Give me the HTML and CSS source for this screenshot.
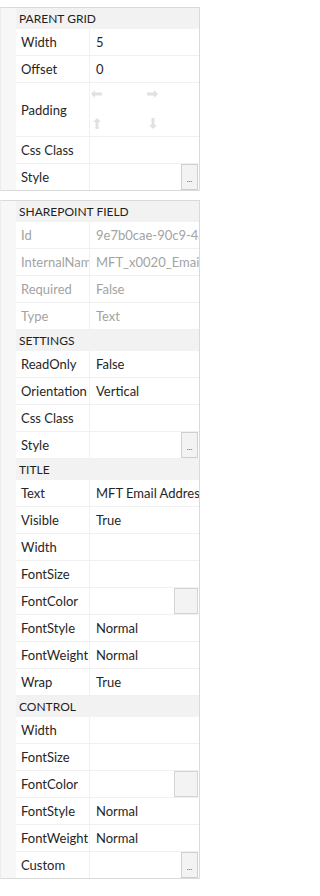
FILE: index.html
```html
<!DOCTYPE html>
<html>
<head>
<meta charset="utf-8">
<link rel="stylesheet" href="styles.css">
</head>
<body>
<div class="panel first">
  <div class="hdr">PARENT GRID</div>
  <div class="row"><div class="name">Width</div><div class="val">5</div></div>
  <div class="row"><div class="name">Offset</div><div class="val">0</div></div>
  <div class="row tall"><div class="name">Padding</div>
    <div class="val arrows">
      <svg class="arr" viewBox="0 0 11 8"><path d="M0 4 L4 0 L4 2.5 L11 2.5 L11 5.5 L4 5.5 L4 8 Z"/></svg>
      <svg class="arr" viewBox="0 0 11 8"><path d="M11 4 L7 0 L7 2.5 L0 2.5 L0 5.5 L7 5.5 L7 8 Z"/></svg>
      <svg class="arr v" viewBox="0 0 8 11"><path d="M4 0 L8 4 L5.5 4 L5.5 11 L2.5 11 L2.5 4 L0 4 Z"/></svg>
      <svg class="arr v" viewBox="0 0 8 11"><path d="M4 11 L8 7 L5.5 7 L5.5 0 L2.5 0 L2.5 7 L0 7 Z"/></svg>
    </div>
  </div>
  <div class="row"><div class="name">Css Class</div><div class="val"></div></div>
  <div class="row"><div class="name">Style</div><div class="val"><span class="btn">...</span></div></div>
</div>

<div class="panel">
  <div class="hdr">SHAREPOINT FIELD</div>
  <div class="row dim"><div class="name">Id</div><div class="val">9e7b0cae-90c9-4a1e-b2c3</div></div>
  <div class="row dim"><div class="name">InternalName</div><div class="val">MFT_x0020_Email_x0020_Address</div></div>
  <div class="row dim"><div class="name">Required</div><div class="val">False</div></div>
  <div class="row dim"><div class="name">Type</div><div class="val">Text</div></div>
  <div class="hdr">SETTINGS</div>
  <div class="row"><div class="name">ReadOnly</div><div class="val">False</div></div>
  <div class="row"><div class="name">Orientation</div><div class="val">Vertical</div></div>
  <div class="row"><div class="name">Css Class</div><div class="val"></div></div>
  <div class="row"><div class="name">Style</div><div class="val"><span class="btn">...</span></div></div>
  <div class="hdr">TITLE</div>
  <div class="row"><div class="name">Text</div><div class="val">MFT Email Address</div></div>
  <div class="row"><div class="name">Visible</div><div class="val">True</div></div>
  <div class="row"><div class="name">Width</div><div class="val"></div></div>
  <div class="row"><div class="name">FontSize</div><div class="val"></div></div>
  <div class="row"><div class="name">FontColor</div><div class="val"><span class="swatch"></span></div></div>
  <div class="row"><div class="name">FontStyle</div><div class="val">Normal</div></div>
  <div class="row"><div class="name">FontWeight</div><div class="val">Normal</div></div>
  <div class="row"><div class="name">Wrap</div><div class="val">True</div></div>
  <div class="hdr">CONTROL</div>
  <div class="row"><div class="name">Width</div><div class="val"></div></div>
  <div class="row"><div class="name">FontSize</div><div class="val"></div></div>
  <div class="row"><div class="name">FontColor</div><div class="val"><span class="swatch"></span></div></div>
  <div class="row"><div class="name">FontStyle</div><div class="val">Normal</div></div>
  <div class="row"><div class="name">FontWeight</div><div class="val">Normal</div></div>
  <div class="row last"><div class="name">Custom</div><div class="val"><span class="btn">...</span></div></div>
</div>
</body>
</html>
```

FILE: styles.css
```css
html, body {
  margin: 0;
  padding: 0;
  background: #ffffff;
}
body {
  font-family: Lato, "Noto Sans", sans-serif;
  color: #262626;
  padding-top: 7px;
}
.panel {
  box-sizing: border-box;
  width: 200px;
  border: 1px solid #dadada;
  border-left-color: #ececec;
  background: #f7f7f7;
  padding-left: 15px;
  margin-bottom: 9px;
}
.hdr {
  height: 21px;
  line-height: 21px;
  background: #f2f2f2;
  font-size: 12px;
  padding-left: 3px;
  white-space: nowrap;
  overflow: hidden;
  color: #1f1f1f;
}
.row {
  display: grid;
  grid-template-columns: 74px 1fr;
  height: 27px;
  box-sizing: border-box;
  border-bottom: 1px solid #f0f0f0;
  background: #ffffff;
  font-size: 13px;
}
.row.tall {
  height: 54px;
}
.row.last,
.first .row:last-child {
  border-bottom: none;
  height: 26px;
}
.name {
  box-sizing: border-box;
  border-right: 1px solid #f0f0f0;
  padding-left: 5px;
  display: flex;
  align-items: center;
  white-space: nowrap;
  overflow: hidden;
}
.val {
  padding-left: 6px;
  display: flex;
  align-items: center;
  white-space: nowrap;
  overflow: hidden;
  min-width: 0;
}
.dim .name, .dim .val {
  color: #a3a3a3;
}
.btn {
  margin-left: auto;
  margin-right: 1px;
  box-sizing: border-box;
  flex: none;
  width: 17px;
  height: 26px;
  border: 1px solid #cfcfcf;
  background: #f3f3f3;
  font-size: 8px;
  color: #555;
  display: flex;
  align-items: flex-end;
  justify-content: center;
  padding-bottom: 6px;
  line-height: 1;
}
.swatch {
  margin-left: auto;
  margin-right: 1px;
  box-sizing: border-box;
  flex: none;
  width: 24px;
  height: 26px;
  border: 1px solid #d4d4d4;
  background: #f3f3f3;
}
.arrows {
  display: grid;
  grid-template-columns: 56px 20px;
  grid-template-rows: 27px 27px;
  padding-left: 1px;
  align-items: center;
}
.arr {
  width: 11px;
  height: 8px;
  fill: #e1e1e1;
  margin-top: -6px;
}
.arr.v {
  width: 8px;
  height: 11px;
  margin-left: 2px;
  margin-top: -1px;
}
```
